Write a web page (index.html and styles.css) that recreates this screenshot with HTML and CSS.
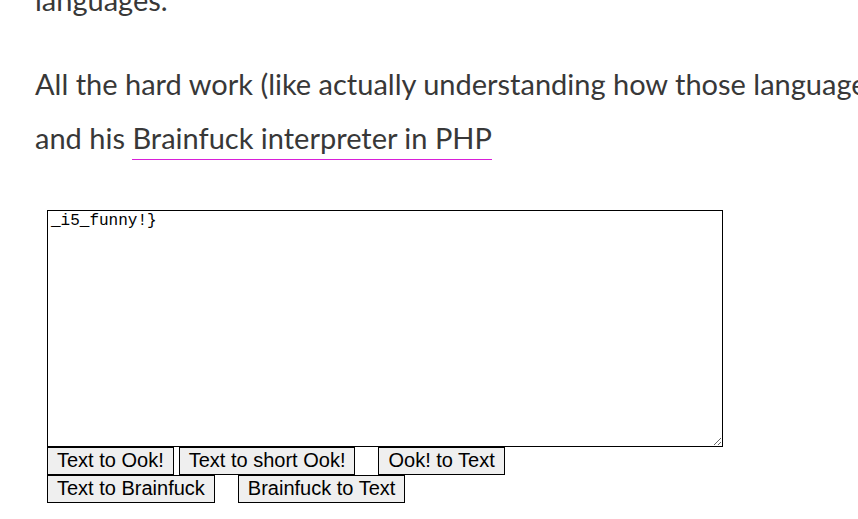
FILE: index.html
```html
<!DOCTYPE html>
<html lang="en">
<head>
<meta charset="utf-8">
<title>Ook! and Brainfuck translator</title>
<link rel="stylesheet" href="styles.css">
</head>
<body>
<main class="content">
  <p class="lead-tail">languages.</p>
  <p class="credits">All the hard work (like actually understanding how those languages work) was done by Daniel Lorch<br>and his <a class="link" href="#">Brainfuck interpreter in PHP</a></p>
  <form class="converter">
    <textarea class="io" spellcheck="false">_i5_funny!}</textarea>
    <div class="row">
      <button type="button" class="btn">Text to Ook!</button>
      <button type="button" class="btn">Text to short Ook!</button>
      <button type="button" class="btn btn-sep">Ook! to Text</button>
    </div>
    <div class="row">
      <button type="button" class="btn">Text to Brainfuck</button>
      <button type="button" class="btn btn-sep">Brainfuck to Text</button>
    </div>
  </form>
</main>
</body>
</html>
```
FILE: styles.css
```css
html, body {
  margin: 0;
  padding: 0;
  background: #fff;
  overflow: hidden;
}

.content {
  padding-left: 35px;
  font-family: Lato, "Noto Sans", sans-serif;
  font-size: 29px;
  line-height: 54px;
  color: #383838;
}

.content p {
  margin: 0 0 30px;
  white-space: nowrap;
}

.lead-tail {
  margin-top: -27px !important;
}

.link {
  color: inherit;
  text-decoration: none;
  padding-bottom: 4px;
  border-bottom: 1px solid #d81fd8;
}

.converter {
  padding: 15px 0 0 12px;
  margin: 0;
}

.io {
  display: block;
  box-sizing: border-box;
  width: 676px;
  height: 237px;
  margin: 0;
  padding: 1px 3px 0;
  border: 1px solid #000;
  border-radius: 0;
  font-family: "Liberation Mono", monospace;
  font-size: 16px;
  line-height: normal;
  color: #000;
  background: #fff;
}

.row {
  display: flex;
  gap: 5px;
}

.btn {
  font-family: "Liberation Sans", Arial, sans-serif;
  font-size: 20px;
  line-height: 23px;
  padding: 1px 9px 2px;
  margin: 0;
  border: 1px solid #000;
  border-radius: 0;
  background: #efefef;
  color: #000;
}

.btn-sep {
  margin-left: 18px;
}
```
